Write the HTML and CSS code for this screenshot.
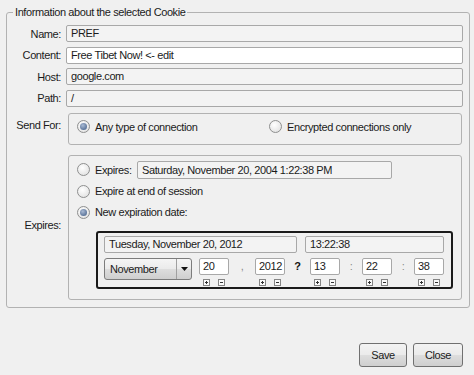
FILE: index.html
```html
<!DOCTYPE html>
<html>
<head>
<meta charset="utf-8">
<link rel="stylesheet" href="styles.css">
</head>
<body>
<div class="dialog">
  <fieldset class="group">
    <legend>Information about the selected Cookie</legend>
    <div class="form">
      <label class="lbl">Name:</label>
      <div class="field">PREF</div>
      <label class="lbl">Content:</label>
      <div class="field white">Free Tibet Now! &lt;- edit</div>
      <label class="lbl">Host:</label>
      <div class="field">google.com</div>
      <label class="lbl">Path:</label>
      <div class="field">/</div>

      <label class="lbl lbl-send">Send For:</label>
      <div class="box sendfor">
        <div class="opt"><span class="radio on"></span>Any type of connection</div>
        <div class="opt"><span class="radio"></span>Encrypted connections only</div>
      </div>

      <label class="lbl">Expires:</label>
      <div class="box expires">
        <div class="opt opt-tall"><span class="radio"></span><span class="opt-text">Expires:</span><div class="field date-old">Saturday, November 20, 2004 1:22:38 PM</div></div>
        <div class="opt"><span class="radio"></span>Expire at end of session</div>
        <div class="opt"><span class="radio on"></span>New expiration date:</div>
        <div class="picker">
          <div class="picker-row">
            <div class="field date-new">Tuesday, November 20, 2012</div>
            <div class="field time-new">13:22:38</div>
          </div>
          <div class="picker-row2">
            <div class="combo">
              <span class="combo-text">November</span>
              <span class="combo-btn"><svg width="7" height="4" viewBox="0 0 7 4"><path d="M0 0H7L3.5 4Z" fill="#111"/></svg></span>
            </div>
            <div class="spin"><div class="spin-box">20</div><div class="spin-btns"><span class="pm plus"></span><span class="pm"></span></div></div>
            <div class="sep sep-a">,</div>
            <div class="spin"><div class="spin-box">2012</div><div class="spin-btns"><span class="pm plus"></span><span class="pm"></span></div></div>
            <div class="sep sep-q">?</div>
            <div class="spin"><div class="spin-box">13</div><div class="spin-btns"><span class="pm plus"></span><span class="pm"></span></div></div>
            <div class="sep sep-c">:</div>
            <div class="spin"><div class="spin-box">22</div><div class="spin-btns"><span class="pm plus"></span><span class="pm"></span></div></div>
            <div class="sep sep-c">:</div>
            <div class="spin"><div class="spin-box">38</div><div class="spin-btns"><span class="pm plus"></span><span class="pm"></span></div></div>
          </div>
        </div>
      </div>
    </div>
  </fieldset>
  <div class="buttons">
    <button class="btn btn-save">Save</button>
    <button class="btn btn-close">Close</button>
  </div>
</div>
</body>
</html>
```

FILE: styles.css
```css
* { box-sizing: border-box; }
html, body { margin: 0; padding: 0; }
body {
  background: #f0f0f0;
  font-family: "Liberation Sans", Arial, sans-serif;
  font-size: 11px;
  letter-spacing: -0.4px;
  color: #1b1b1b;
  width: 474px;
  height: 375px;
  overflow: hidden;
}
.dialog {
  padding: 6px 4px 0 6px;
  display: flex;
  flex-direction: column;
}
.group {
  margin: 0;
  padding: 7px 6px 7px 6px;
  border: 1px solid #b2b2b2;
  border-radius: 3px;
  min-width: 0;
}
.group legend {
  padding: 0 2px;
  line-height: 12px;
}
.form {
  display: grid;
  grid-template-columns: 48px 1fr;
  column-gap: 5px;
  row-gap: 4.67px;
}
.lbl {
  text-align: right;
  align-self: center;
  white-space: nowrap;
}
.lbl-send {
  align-self: start;
  margin-top: 7px;
}
.field {
  height: 17px;
  border: 1px solid #a8a8a8;
  border-radius: 2px;
  background: #f3f3f3;
  padding: 0 4px;
  line-height: 15px;
  white-space: nowrap;
  overflow: hidden;
}
.field.white { background: #fff; }
.box {
  border: 1px solid #b2b2b2;
  border-radius: 3px;
  margin: 0 1px 0 2px;
}
.sendfor {
  margin-top: 1.33px;
  height: 32px;
  display: grid;
  grid-template-columns: 192px 1fr;
  align-items: center;
  padding: 0 8px 4px 8px;
}
.expires {
  margin-top: 5.33px;
  padding: 5px 8px 10px 8px;
  display: flex;
  flex-direction: column;
  gap: 4px;
}
.opt {
  display: flex;
  align-items: center;
  height: 17px;
  white-space: nowrap;
}
.opt-tall { height: 18px; }
.opt-text { width: 42px; }
.radio {
  width: 13px;
  height: 13px;
  border-radius: 50%;
  border: 1px solid #8e8f8f;
  background: radial-gradient(circle at 40% 35%, #ffffff, #dcdcdc);
  margin-right: 5px;
  position: relative;
  flex: none;
}
.radio.on::after {
  content: "";
  position: absolute;
  left: 2px;
  top: 2px;
  width: 7px;
  height: 7px;
  border-radius: 50%;
  background: radial-gradient(circle at 40% 35%, #a9bad4, #3e5a84);
}
.date-old {
  width: 255px;
  height: 18px;
  line-height: 16px;
}
.picker {
  margin-top: 6px;
  margin-left: 19px;
  height: 58px;
  border: 2px solid #1a1a1a;
  border-radius: 3px;
  padding: 3px 7px 1px 6px;
  display: flex;
  flex-direction: column;
  gap: 5px;
}
.picker-row {
  display: flex;
  gap: 8px;
}
.date-new { width: 193px; }
.time-new { flex: 1; }
.picker-row2 {
  display: flex;
  align-items: flex-start;
}
.combo {
  width: 88px;
  height: 22px;
  border: 1px solid #7c7c7c;
  border-radius: 3px;
  background: linear-gradient(#f5f5f5, #ebebeb 48%, #dddddd 52%, #cfcfcf);
  display: flex;
  margin-right: 7px;
}
.combo-text {
  flex: 1;
  padding-left: 5px;
  line-height: 20px;
}
.combo-btn {
  width: 15px;
  border-left: 1px solid #a0a0a0;
  display: flex;
  align-items: center;
  justify-content: center;
}
.spin {
  width: 30px;
  display: flex;
  flex-direction: column;
  gap: 4px;
}
.spin-box {
  height: 17px;
  border: 1px solid #a8a8a8;
  border-radius: 2px;
  background: #fff;
  padding-left: 3px;
  line-height: 15px;
}
.spin-btns {
  display: flex;
  gap: 8px;
  padding-left: 4px;
}
.pm {
  width: 7px;
  height: 7px;
  border: 1px solid #858585;
  background: #fafafa;
  position: relative;
}
.pm::before {
  content: "";
  position: absolute;
  left: 1px;
  right: 1px;
  top: 2px;
  height: 1px;
  background: #333;
}
.pm.plus::after {
  content: "";
  position: absolute;
  top: 1px;
  bottom: 1px;
  left: 2px;
  width: 1px;
  background: #333;
}
.sep {
  height: 17px;
  line-height: 17px;
  text-align: center;
  color: #8a8a8a;
}
.sep-a { width: 26px; }
.sep-q { width: 25px; color: #111; font-weight: bold; }
.sep-c { width: 22px; }
.buttons {
  display: flex;
  justify-content: flex-end;
  gap: 6px;
  margin-top: 35px;
  padding-right: 7px;
}
.btn {
  font: inherit;
  letter-spacing: inherit;
  height: 24px;
  border: 1px solid #707070;
  border-radius: 3px;
  background: linear-gradient(#f3f3f3, #ebebeb 48%, #dddddd 52%, #cfcfcf);
  padding: 0;
  color: #1b1b1b;
}
.btn-save { width: 48px; }
.btn-close { width: 50px; }
```
